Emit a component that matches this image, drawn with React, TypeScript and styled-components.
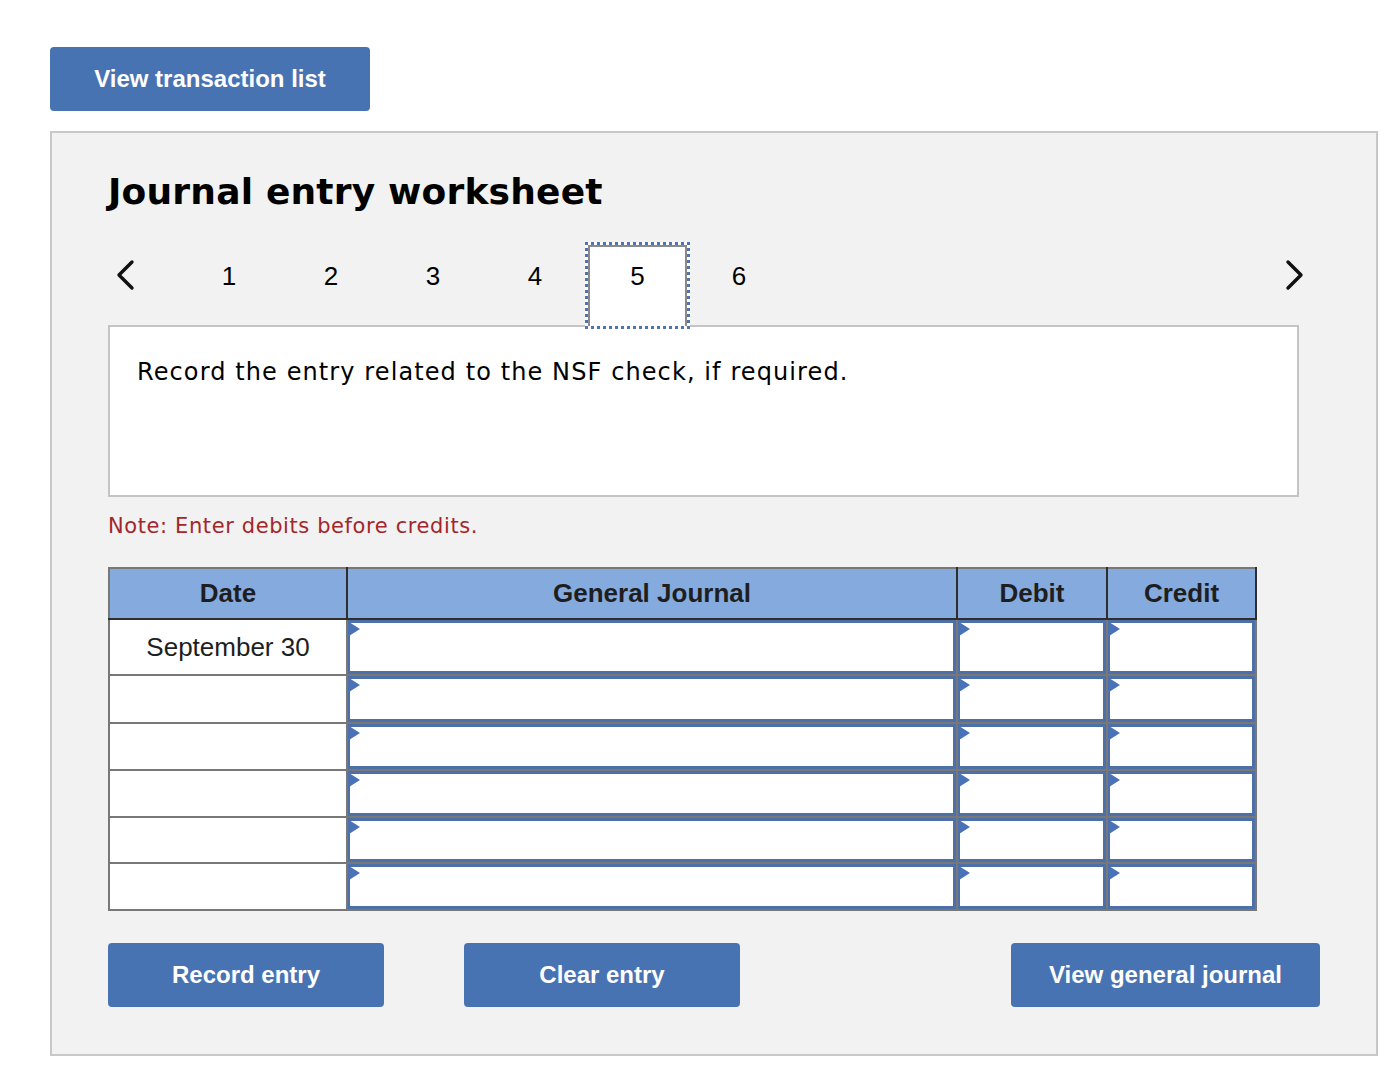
import React from "react";
import styled, { createGlobalStyle } from "styled-components";

const Global = createGlobalStyle`
  html, body { margin: 0; padding: 0; background: #ffffff; }
  body { font-family: "Liberation Sans", Arial, sans-serif; color: #000; }
`;

const Page = styled.div`
  padding: 47px 0 0 50px;
  width: 1328px;
`;

const BlueButton = styled.button<{ $w: number }>`
  width: ${(p) => p.$w}px;
  height: 64px;
  border: none;
  border-radius: 4px;
  background: #4873b3;
  color: #ffffff;
  font-family: "Liberation Sans", Arial, sans-serif;
  font-weight: bold;
  font-size: 24px;
  padding: 0;
  cursor: pointer;
`;

const TopBar = styled.div`
  margin-bottom: 20px;
`;

const Panel = styled.div`
  border: 2px solid #c8c8c8;
  background: #f2f2f2;
  padding: 36px 56px 47px 56px;
`;

const Title = styled.h1`
  margin: 0 0 27px 0;
  font-family: "DejaVu Sans", Verdana, sans-serif;
  font-weight: bold;
  font-size: 36px;
  letter-spacing: 0.2px;
  line-height: 46px;
`;

const Nav = styled.div`
  display: flex;
  align-items: flex-start;
  width: 1205px;
  height: 83px;
`;

const Arrow = styled.button`
  width: 70px;
  height: 83px;
  border: none;
  background: transparent;
  padding: 17px 0 0 5px;
  display: flex;
  align-items: flex-start;
  justify-content: flex-start;
  cursor: pointer;
`;

const NextArrow = styled(Arrow)`
  margin-left: auto;
  width: 30px;
  padding-left: 0;
`;

const Tab = styled.div<{ $active?: boolean }>`
  width: ${(p) => (p.$active ? 105 : 102)}px;
  height: 87px;
  box-sizing: border-box;
  display: flex;
  justify-content: center;
  align-items: flex-start;
  padding-top: 14px;
  font-family: "Liberation Sans", Arial, sans-serif;
  font-size: 26px;
  line-height: 34px;
  border: 3px dotted ${(p) => (p.$active ? "#4f74b0" : "transparent")};
  background: ${(p) => (p.$active ? "#ffffff" : "transparent")};
  box-shadow: ${(p) =>
    p.$active ? "inset 2px 2px 0 #8a8a8a, inset -2px 0 0 #8a8a8a" : "none"};
  position: relative;
  z-index: ${(p) => (p.$active ? 2 : 0)};
  margin-left: ${(p) => (p.$active ? "-1px" : "0")};
  margin-right: ${(p) => (p.$active ? "-2px" : "0")};
`;

const Prompt = styled.div`
  width: 1191px;
  height: 172px;
  box-sizing: border-box;
  background: #ffffff;
  border: 2px solid #c4c4c4;
  padding: 28px 0 0 27px;
  font-family: "DejaVu Sans", Verdana, sans-serif;
  font-size: 24px;
  letter-spacing: 1.1px;
  line-height: 34px;
  position: relative;
  z-index: 1;
`;

const Note = styled.div`
  margin: 15px 0 27px 0;
  font-family: "DejaVu Sans", Verdana, sans-serif;
  font-size: 21px;
  letter-spacing: 0.6px;
  line-height: 28px;
  color: #a3262a;
`;

const Table = styled.table`
  border-collapse: collapse;
  table-layout: fixed;
  border: 2px solid #787878;
`;

const Th = styled.th<{ $w: number }>`
  width: ${(p) => p.$w}px;
  height: 49px;
  background: #84aade;
  border: 2px solid #2e2e2e;
  border-top-color: #787878;
  font-family: "Liberation Sans", Arial, sans-serif;
  font-weight: bold;
  font-size: 26px;
  color: #1e1e1e;
  padding: 0;
  &:first-child { border-left-color: #787878; }
`;

const DateCell = styled.td`
  border: 2px solid #787878;
  background: #ffffff;
  text-align: center;
  font-family: "Liberation Sans", Arial, sans-serif;
  font-size: 26px;
  color: #1e1e1e;
  padding: 0;
`;

const InputCell = styled.td`
  border: 2px solid #787878;
  padding: 0;
  background: #ffffff;
  height: 1px;
`;

const Field = styled.div`
  position: relative;
  box-sizing: border-box;
  height: 100%;
  border: 3px solid #4e70a8;
  border-left-width: 2px;
  background: #ffffff;
  &::before {
    content: "";
    position: absolute;
    left: -1px;
    top: -1px;
    width: 0;
    height: 0;
    border-top: 7px solid transparent;
    border-bottom: 7px solid transparent;
    border-left: 11px solid #4a72b8;
  }
`;

const Row = styled.tr<{ $h: number }>`
  height: ${(p) => p.$h}px;
`;

const Actions = styled.div`
  display: flex;
  gap: 80px;
  margin-top: 32px;
  width: 1212px;
  & > :last-child { margin-left: auto; }
`;

const Chevron = ({ dir }: { dir: "left" | "right" }) => (
  <svg width="24" height="32" viewBox="0 0 24 32">
    <path
      d={dir === "left" ? "M19 3 L6 16 L19 29" : "M5 3 L18 16 L5 29"}
      fill="none"
      stroke="#111"
      strokeWidth="3.4"
      strokeLinecap="round"
      strokeLinejoin="round"
    />
  </svg>
);

const rows = [
  { date: "September 30", h: 56 },
  { date: "", h: 48 },
  { date: "", h: 47 },
  { date: "", h: 47 },
  { date: "", h: 46 },
  { date: "", h: 47 },
];

export default function App() {
  return (
    <>
      <Global />
      <Page>
        <TopBar>
          <BlueButton $w={320}>View transaction list</BlueButton>
        </TopBar>
        <Panel>
          <Title>Journal entry worksheet</Title>
          <Nav>
            <Arrow aria-label="previous">
              <Chevron dir="left" />
            </Arrow>
            {[1, 2, 3, 4, 5, 6].map((n) => (
              <Tab key={n} $active={n === 5}>
                {n}
              </Tab>
            ))}
            <NextArrow aria-label="next">
              <Chevron dir="right" />
            </NextArrow>
          </Nav>
          <Prompt>Record the entry related to the NSF check, if required.</Prompt>
          <Note>Note: Enter debits before credits.</Note>
          <Table>
            <thead>
              <tr>
                <Th $w={236}>Date</Th>
                <Th $w={608}>General Journal</Th>
                <Th $w={148}>Debit</Th>
                <Th $w={147}>Credit</Th>
              </tr>
            </thead>
            <tbody>
              {rows.map((r, i) => (
                <Row key={i} $h={r.h}>
                  <DateCell>{r.date}</DateCell>
                  <InputCell>
                    <Field />
                  </InputCell>
                  <InputCell>
                    <Field />
                  </InputCell>
                  <InputCell>
                    <Field />
                  </InputCell>
                </Row>
              ))}
            </tbody>
          </Table>
          <Actions>
            <BlueButton $w={276}>Record entry</BlueButton>
            <BlueButton $w={276}>Clear entry</BlueButton>
            <BlueButton $w={309}>View general journal</BlueButton>
          </Actions>
        </Panel>
      </Page>
    </>
  );
}
